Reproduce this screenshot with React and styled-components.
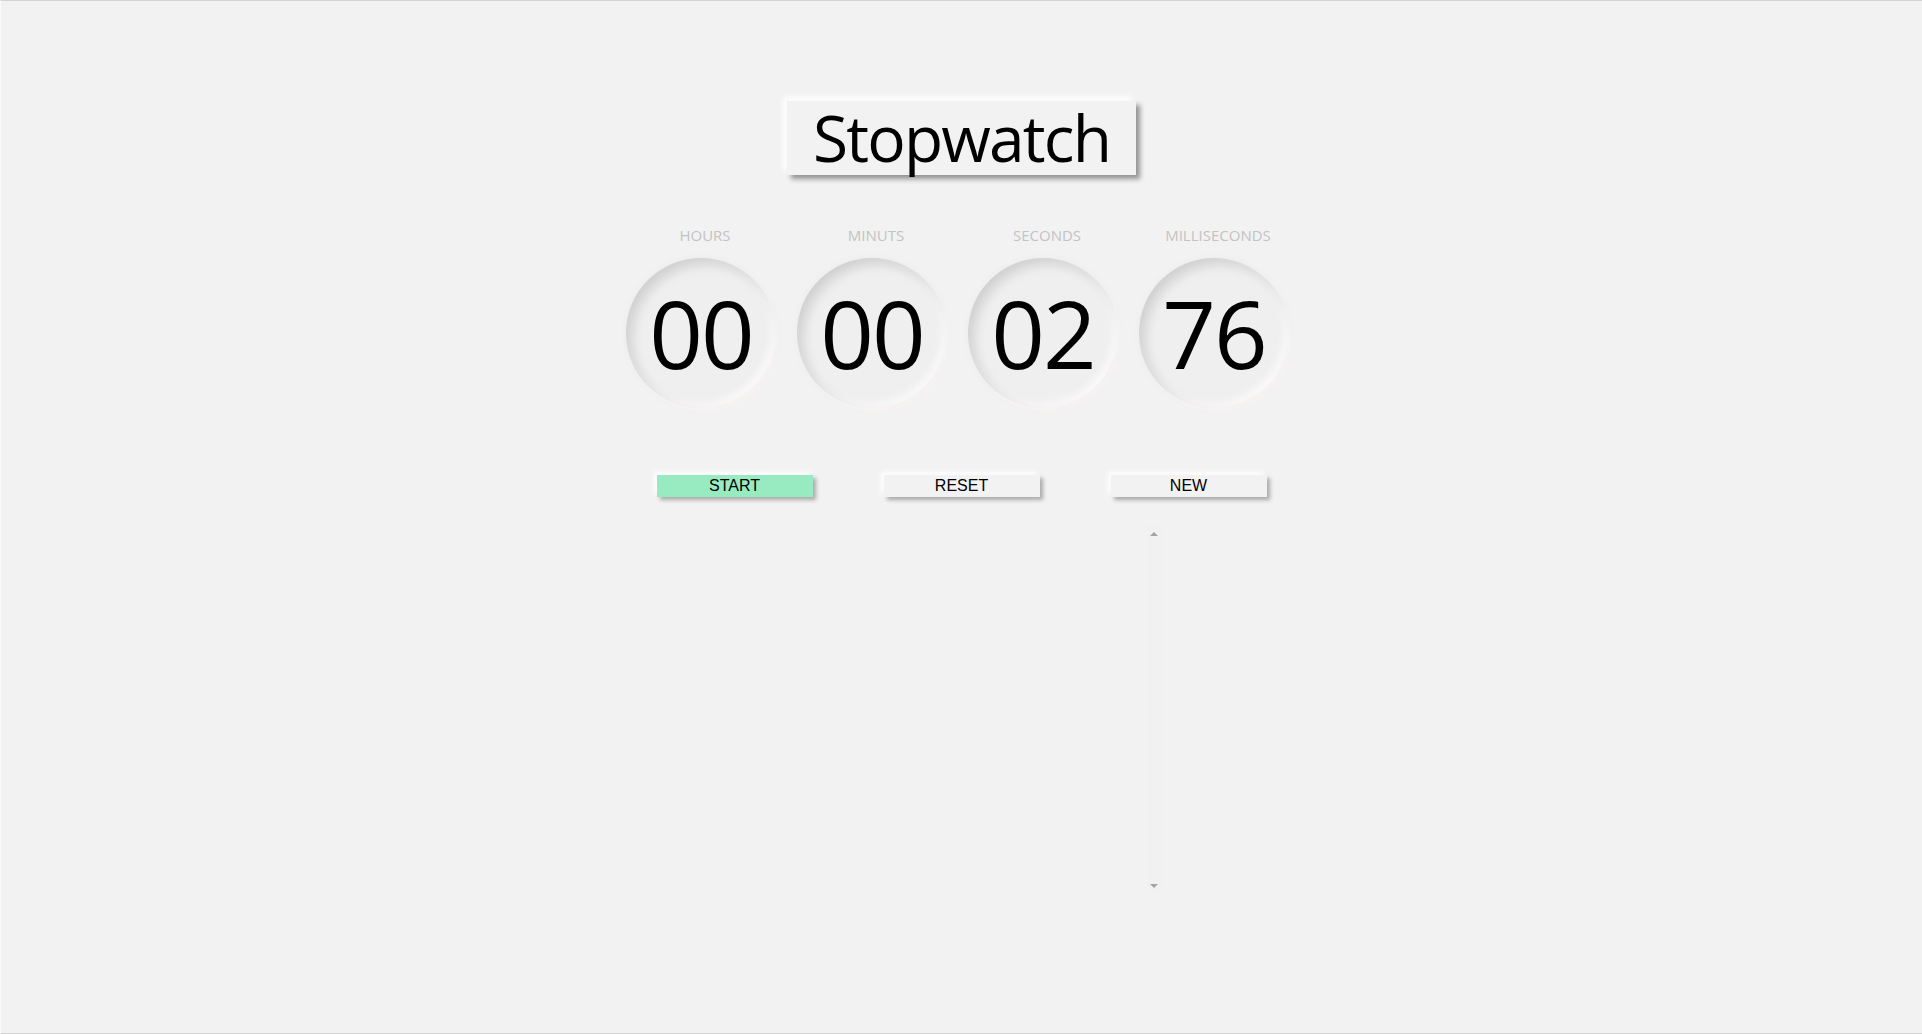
import styled, { createGlobalStyle } from "styled-components"

const GlobalStyle = createGlobalStyle`
    html, body {
        margin: 0;
        padding: 0;
        background-color: #f2f2f2;
    }
    *{
        box-sizing: border-box;
    }
`

const Page = styled.main`
    height: 1034px;
    padding-top: 100px;
    display: flex;
    flex-direction: column;
    align-items: center;
    background-color: #f2f2f2;
    border-top: 1px solid #d4d4d4;
    border-bottom: 1px solid #d4d4d4;
    border-left: 1px solid #fafafa;
    font-family: "Open Sans", "Noto Sans", sans-serif;
`

const Title = styled.h1`
    margin: 0;
    width: 349px;
    height: 74px;
    line-height: 74px;
    text-align: center;
    font-size: 64px;
    font-weight: 400;
    letter-spacing: -1.8px;
    color: #000000;
    background-color: #f2f2f2;
    box-shadow: 4px 4px 5px rgba(0, 0, 0, 0.4), -4px -4px 6px #ffffff;
`

const Display = styled.section`
    margin-top: 50px;
    margin-right: 8px;
    display: flex;
    gap: 21px;
`

const Unit = styled.div`
    display: flex;
    flex-direction: column;
    align-items: center;
    gap: 13px;
`

const Label = styled.span`
    padding-left: 8px;
    height: 20px;
    line-height: 20px;
    font-size: 15px;
    color: #c3c3c3;
    text-transform: uppercase;
`

const Dial = styled.div`
    width: 150px;
    height: 150px;
    border-radius: 50%;
    background-color: #efefef;
    text-align: center;
    line-height: 150px;
    font-size: 94px;
    letter-spacing: -2px;
    color: #000000;
    box-shadow:
        inset 6px 6px 12px rgba(0, 0, 0, 0.13),
        inset -4px -4px 8px rgba(255, 255, 255, 0.7),
        3px 4px 2px #f6f2f2,
        0 0 10px rgba(0, 0, 0, 0.03);
`

const Controls = styled.div`
    margin-top: 67px;
    display: flex;
    gap: 71px;
`

const Button = styled.button`
    width: 156px;
    height: 22px;
    padding: 0;
    border: none;
    background-color: ${(props) => (props.$primary ? "#98ebc1" : "#f2f2f2")};
    color: #000000;
    font-family: "Liberation Sans", Arial, sans-serif;
    font-size: 16px;
    text-transform: uppercase;
    cursor: pointer;
    box-shadow: 3px 3px 4px rgba(0, 0, 0, 0.3), -3px -3px 5px #ffffff;
`

const LapsBox = styled.section`
    margin-top: 28px;
    width: 402px;
    height: 369px;
    display: flex;
`

const LapList = styled.ol`
    flex: 1;
    margin: 0;
    padding: 0;
    overflow: hidden;
    list-style: none;
`

// classic scrollbar track with its two step arrows, no thumb while the list is empty
const ScrollTrack = styled.div`
    width: 17px;
    background-color: #f1f1f1;
    display: flex;
    flex-direction: column;
    justify-content: space-between;
`

const ScrollArrow = styled.span`
    height: 17px;
    display: flex;
    align-items: center;
    justify-content: center;

    &::before{
        content: "";
        width: 0;
        height: 0;
        border-left: 4px solid transparent;
        border-right: 4px solid transparent;
        border-${(props) => (props.$down ? "top" : "bottom")}: 4px solid #a3a3a3;
    }
`

const units = [
    { label: "Hours", value: "00" },
    { label: "Minuts", value: "00" },
    { label: "Seconds", value: "02" },
    { label: "Milliseconds", value: "76" },
]

const App = () => {
    return (
        <>
            <GlobalStyle />
            <Page>
                <Title>Stopwatch</Title>

                <Display>
                    {units.map((unit) => (
                        <Unit key={unit.label}>
                            <Label>{unit.label}</Label>
                            <Dial>{unit.value}</Dial>
                        </Unit>
                    ))}
                </Display>

                <Controls>
                    <Button $primary>Start</Button>
                    <Button>Reset</Button>
                    <Button>New</Button>
                </Controls>

                <LapsBox>
                    <LapList />
                    <ScrollTrack>
                        <ScrollArrow />
                        <ScrollArrow $down />
                    </ScrollTrack>
                </LapsBox>
            </Page>
        </>
    )
}

export default App
